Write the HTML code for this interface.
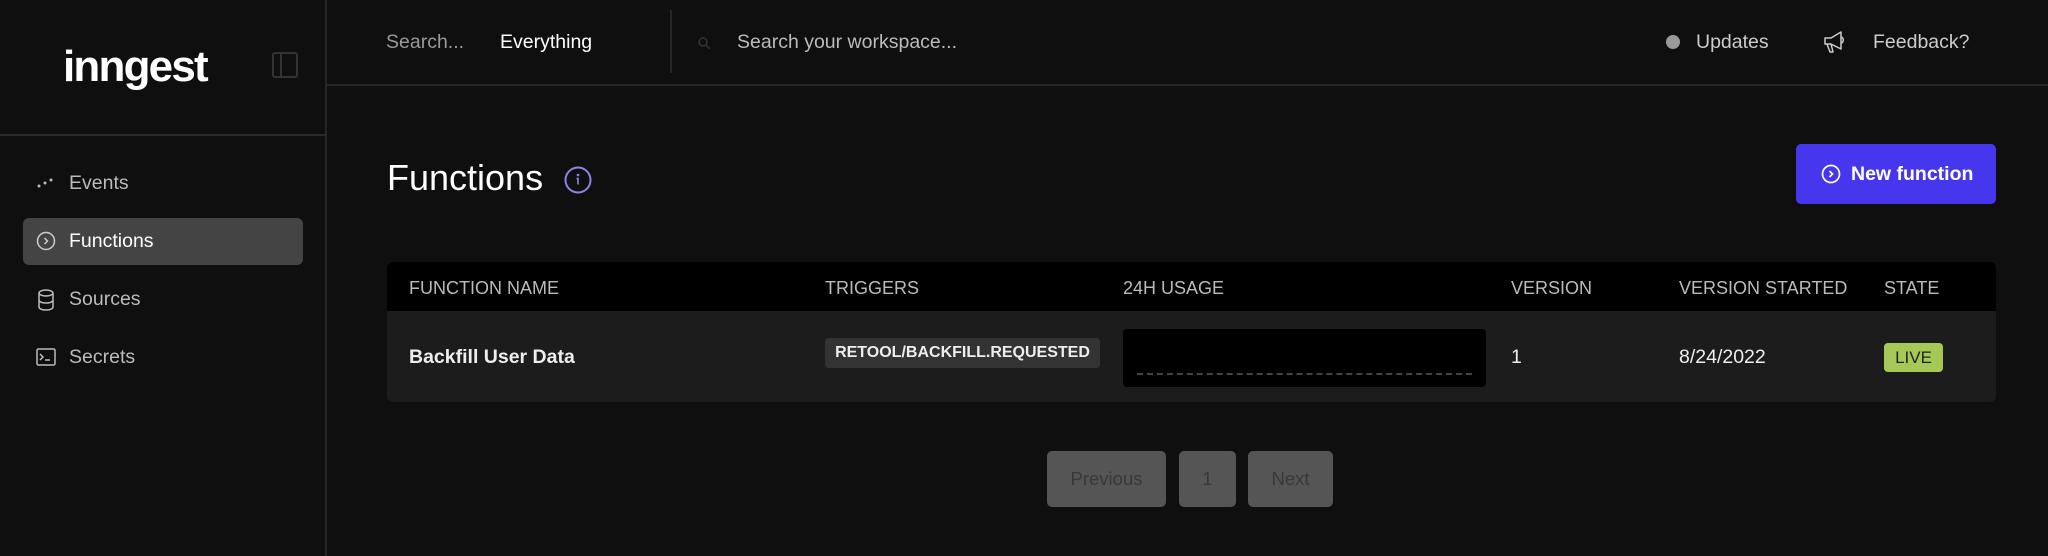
<!DOCTYPE html>
<html><head><meta charset="utf-8"><style>
*{box-sizing:border-box;margin:0;padding:0}
body{width:2048px;height:556px;background:#0f0f0f;font-family:"Liberation Sans",sans-serif;color:#ddd;position:relative;overflow:hidden}
.a{position:absolute;white-space:nowrap}
.side{left:0;top:0;width:327px;height:556px;border-right:2px solid #262626}
.hl{left:0;top:134px;width:327px;height:2px;background:#2a2a2a}
.top{left:327px;top:84px;width:1721px;height:2px;background:#262626}
.nav{font-size:19.5px;color:#bbb}
.th{font-size:18px;color:#bbb;top:278px}
.td{font-size:19.5px;color:#eee;top:346px}
.pg{background:#555;border-radius:5px;color:#383838;font-size:18.5px;display:flex;align-items:center;justify-content:center;top:451px;height:56px}
</style></head><body>
<div class="a side"></div>
<div class="a hl"></div>
<div class="a top"></div>
<div class="a" style="left:63px;top:42px;font-size:44px;font-weight:bold;color:#fff;letter-spacing:-1.8px">inngest</div>
<svg class="a" style="left:272px;top:52px" width="26" height="26"><rect x="1" y="1" width="24" height="24" rx="2" fill="none" stroke="#333" stroke-width="2"/><line x1="9" y1="1" x2="9" y2="25" stroke="#333" stroke-width="2"/></svg>

<svg class="a" style="left:36px;top:175px" width="20" height="16"><circle cx="3" cy="11" r="1.5" fill="#bbb"/><circle cx="9" cy="8" r="1.5" fill="#bbb"/><circle cx="15" cy="5" r="1.5" fill="#bbb"/></svg>
<div class="a nav" style="left:69px;top:172px">Events</div>
<div class="a" style="left:23px;top:218px;width:280px;height:47px;background:#444;border-radius:6px"></div>
<svg class="a" style="left:36px;top:231px" width="20" height="20"><circle cx="10" cy="10" r="8.5" fill="none" stroke="#ccc" stroke-width="1.5"/><path d="M8.5 7l3 3-3 3" fill="none" stroke="#ccc" stroke-width="1.5"/></svg>
<div class="a nav" style="left:69px;top:230px;color:#fff">Functions</div>
<svg class="a" style="left:37px;top:289px" width="18" height="22"><ellipse cx="9" cy="4" rx="7" ry="3" fill="none" stroke="#bbb" stroke-width="1.5"/><path d="M2 4v14c0 1.7 3 3 7 3s7-1.3 7-3V4M2 11c0 1.7 3 3 7 3s7-1.3 7-3" fill="none" stroke="#bbb" stroke-width="1.5"/></svg>
<div class="a nav" style="left:69px;top:288px">Sources</div>
<svg class="a" style="left:36px;top:347px" width="20" height="20"><rect x="1" y="2" width="18" height="16" rx="1.5" fill="none" stroke="#bbb" stroke-width="1.5"/><path d="M4 7l3 3-3 3M9 13h5" fill="none" stroke="#bbb" stroke-width="1.5"/></svg>
<div class="a nav" style="left:69px;top:346px">Secrets</div>

<div class="a" style="left:386px;top:31px;font-size:19.5px;color:#999">Search...</div>
<div class="a" style="left:500px;top:31px;font-size:19.5px;color:#fff">Everything</div>
<div class="a" style="left:670px;top:10px;width:2px;height:63px;background:#262626"></div>
<svg class="a" style="left:697px;top:36px" width="14" height="14"><circle cx="6" cy="6" r="4" fill="none" stroke="#333" stroke-width="1.5"/><line x1="9" y1="9" x2="13" y2="13" stroke="#333" stroke-width="1.5"/></svg>
<div class="a" style="left:737px;top:31px;font-size:19.5px;color:#bbb">Search your workspace...</div>
<div class="a" style="left:1666px;top:35px;width:14px;height:14px;border-radius:50%;background:#999"></div>
<div class="a" style="left:1696px;top:31px;font-size:19.5px;color:#ccc">Updates</div>
<svg class="a" style="left:1823px;top:30px" width="26" height="26"><path d="M2 8h6l10-6v17l-10-5H2z M18 7c3 0 3 6 0 6 M4 14l3 8h3l-2-8" fill="none" stroke="#ccc" stroke-width="1.5" stroke-linejoin="round"/></svg>
<div class="a" style="left:1873px;top:31px;font-size:19.5px;color:#ccc">Feedback?</div>

<div class="a" style="left:387px;top:157px;font-size:36px;color:#fff">Functions</div>
<svg class="a" style="left:564px;top:166px" width="28" height="28"><circle cx="14" cy="14" r="12.5" fill="none" stroke="#8b85e8" stroke-width="2"/><circle cx="14" cy="9" r="1.3" fill="#8b85e8"/><path d="M12.5 12.5h1.5v6" fill="none" stroke="#8b85e8" stroke-width="1.6"/></svg>

<div class="a" style="left:1796px;top:144px;width:200px;height:60px;background:#4636ee;border-radius:5px"></div>
<svg class="a" style="left:1821px;top:164px" width="20" height="20"><circle cx="10" cy="10" r="8.5" fill="none" stroke="#fff" stroke-width="1.7"/><path d="M8.5 7l3 3-3 3" fill="none" stroke="#fff" stroke-width="1.7"/></svg>
<div class="a" style="left:1851px;top:163px;font-size:19.5px;color:#fff;font-weight:bold">New function</div>

<div class="a" style="left:387px;top:262px;width:1609px;height:140px;border-radius:6px;background:#1c1c1c;overflow:hidden"><div style="height:49px;background:#000"></div></div>
<div class="a th" style="left:409px">FUNCTION NAME</div>
<div class="a th" style="left:825px">TRIGGERS</div>
<div class="a th" style="left:1123px">24H USAGE</div>
<div class="a th" style="left:1511px">VERSION</div>
<div class="a th" style="left:1679px">VERSION STARTED</div>
<div class="a th" style="left:1884px">STATE</div>

<div class="a td" style="left:409px;font-weight:bold">Backfill User Data</div>
<div class="a" style="left:825px;top:338px;width:275px;height:30px;background:#333;border-radius:4px;font-size:16px;font-weight:bold;color:#eee;line-height:30px;text-align:center">RETOOL/BACKFILL.REQUESTED</div>
<div class="a" style="left:1123px;top:329px;width:363px;height:58px;background:#000;border-radius:4px"></div>
<div class="a" style="left:1137px;top:373px;width:335px;border-top:2px dashed #444"></div>
<div class="a td" style="left:1511px">1</div>
<div class="a td" style="left:1679px">8/24/2022</div>
<div class="a" style="left:1884px;top:343px;width:59px;height:29px;background:#a5c956;border-radius:4px;font-size:17px;color:#222;line-height:29px;text-align:center">LIVE</div>

<div class="a pg" style="left:1047px;width:119px">Previous</div>
<div class="a pg" style="left:1179px;width:57px">1</div>
<div class="a pg" style="left:1248px;width:85px">Next</div>
</body></html>
